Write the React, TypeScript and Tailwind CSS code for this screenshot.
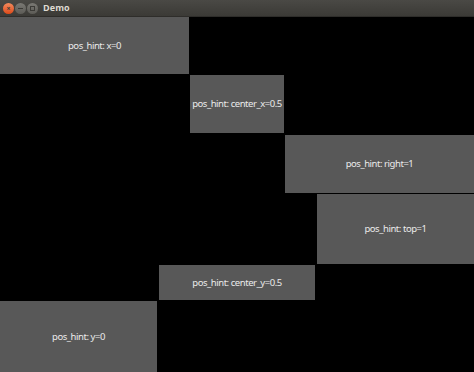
import React from "react";

const rows: { label: string; ml: number; w: number; h: number; mt: number }[] = [
  { label: "pos_hint: x=0", ml: 0, w: 189, h: 57, mt: 0 },
  { label: "pos_hint: center_x=0.5", ml: 190, w: 94, h: 58, mt: 1 },
  { label: "pos_hint: right=1", ml: 285, w: 189, h: 58, mt: 2 },
  { label: "pos_hint: top=1", ml: 317, w: 157, h: 70, mt: 1 },
  { label: "pos_hint: center_y=0.5", ml: 159, w: 156, h: 35, mt: 1 },
  { label: "pos_hint: y=0", ml: 0, w: 157, h: 71, mt: 1 },
];

export default function App() {
  return (
    <div className="w-[474px] h-[372px] bg-black overflow-hidden flex flex-col" style={{ fontFamily: '"Noto Sans", "Open Sans", sans-serif' }}>
      <div className="h-[17px] shrink-0 flex items-center bg-gradient-to-b from-[#4a4945] to-[#3b3a36] border-b border-[#2e2d2a]">
        <div className="flex items-center gap-[1px] pl-[3px]">
          <div className="w-[11px] h-[11px] rounded-full bg-gradient-to-b from-[#f48a5c] to-[#dd4814] flex items-center justify-center">
            <span className="text-[7px] leading-none text-[#3c3b37] font-bold">×</span>
          </div>
          <div className="w-[11px] h-[11px] rounded-full bg-gradient-to-b from-[#7a7974] to-[#5c5b56] flex items-center justify-center">
            <div className="w-[5px] h-[1px] bg-[#3c3b37]" />
          </div>
          <div className="w-[11px] h-[11px] rounded-full bg-gradient-to-b from-[#7a7974] to-[#5c5b56] flex items-center justify-center">
            <div className="w-[5px] h-[5px] border border-[#3c3b37]" />
          </div>
        </div>
        <span className="ml-[5px] text-[9px] font-bold text-[#dfdbd2] tracking-[0.1px]" style={{ fontFamily: '"Open Sans", "Noto Sans", sans-serif' }}>Demo</span>
      </div>
      {rows.map((r) => (
        <div
          key={r.label}
          className="shrink-0 flex items-center justify-center bg-[#585858] text-[#ebebeb] text-[9.5px] leading-none whitespace-nowrap tracking-[-0.45px]"
          style={{ marginLeft: r.ml, width: r.w, height: r.h, marginTop: r.mt }}
        >
          {r.label}
        </div>
      ))}
    </div>
  );
}
